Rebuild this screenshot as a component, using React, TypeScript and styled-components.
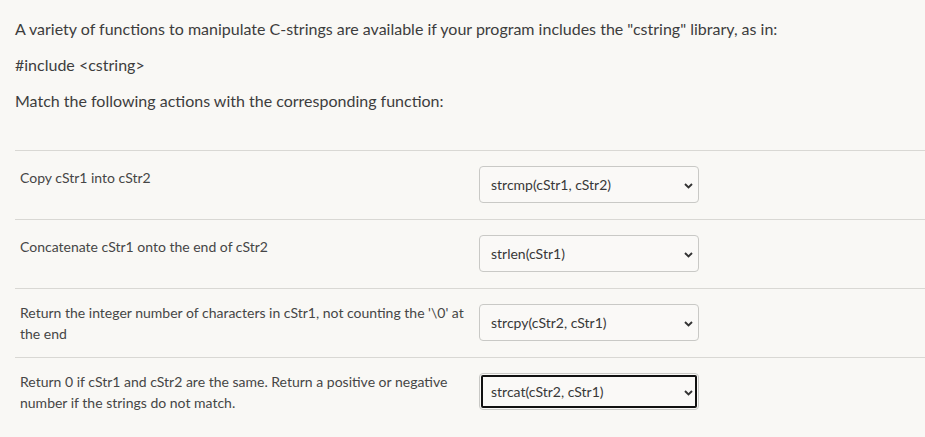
import React from "react";
import styled, { createGlobalStyle } from "styled-components";

const Global = createGlobalStyle`
  html, body {
    margin: 0;
    padding: 0;
    background: #f9f8f5;
  }
  body {
    font-family: Lato, "Noto Sans", sans-serif;
    color: #3a3a3a;
  }
`;

const Page = styled.div`
  padding: 0 0 0 15px;
  overflow: hidden;
`;

const Intro = styled.div`
  padding-top: 17px;
  margin-bottom: 37px;
`;

const Para = styled.p`
  margin: 0 0 12px;
  font-size: 16px;
  line-height: 24px;
  color: #3d3d3d;
`;

const List = styled.div`
  display: flex;
  flex-direction: column;
`;

const Row = styled.div`
  display: flex;
  align-items: center;
  border-top: 1px solid #d9d8d4;
`;

const Label = styled.div`
  box-sizing: border-box;
  width: 455px;
  min-height: 37px;
  padding: 0 5px;
  font-size: 14px;
  line-height: 21px;
  color: #464646;
`;

const SelectCell = styled.div`
  padding: 15px 0 16px 9px;
`;

const SelectWrap = styled.div`
  position: relative;
  width: 220px;
  height: 37px;
`;

const Select = styled.select<{ $focused?: boolean }>`
  appearance: none;
  -webkit-appearance: none;
  box-sizing: border-box;
  width: 220px;
  height: 37px;
  margin: 0;
  padding: 0 28px 0 11px;
  border: 1px solid #c9c9c6;
  border-radius: 4px;
  background: #faf9f7;
  font-family: Lato, "Noto Sans", sans-serif;
  font-size: 14px;
  color: #383838;
  outline: ${(p) => (p.$focused ? "2px solid #111" : "none")};
  outline-offset: -4px;
`;

const Chevron = styled.svg`
  position: absolute;
  right: 6px;
  top: 50%;
  width: 9px;
  height: 6px;
  margin-top: -2px;
  pointer-events: none;
`;

const options = [
  "strcmp(cStr1, cStr2)",
  "strlen(cStr1)",
  "strcpy(cStr2, cStr1)",
  "strcat(cStr2, cStr1)",
];

const rows = [
  { label: "Copy cStr1 into cStr2", value: "strcmp(cStr1, cStr2)" },
  { label: "Concatenate cStr1 onto the end of cStr2", value: "strlen(cStr1)" },
  {
    label:
      "Return the integer number of characters in cStr1, not counting the '\\0' at the end",
    value: "strcpy(cStr2, cStr1)",
  },
  {
    label:
      "Return 0 if cStr1 and cStr2 are the same. Return a positive or negative number if the strings do not match.",
    value: "strcat(cStr2, cStr1)",
    focused: true,
  },
];

export default function App() {
  return (
    <Page>
      <Global />
      <Intro>
        <Para>
          A variety of functions to manipulate C-strings are available if your
          program includes the "cstring" library, as in:
        </Para>
        <Para>#include &lt;cstring&gt;</Para>
        <Para>Match the following actions with the corresponding function:</Para>
      </Intro>
      <List>
        {rows.map((r) => (
          <Row key={r.label}>
            <Label>{r.label}</Label>
            <SelectCell>
              <SelectWrap>
                <Select defaultValue={r.value} $focused={r.focused}>
                  {options.map((o) => (
                    <option key={o} value={o}>
                      {o}
                    </option>
                  ))}
                </Select>
                <Chevron viewBox="0 0 9 6">
                  <path
                    d="M1 1 L4.5 4.5 L8 1"
                    fill="none"
                    stroke="#333"
                    strokeWidth="1.9"
                  />
                </Chevron>
              </SelectWrap>
            </SelectCell>
          </Row>
        ))}
      </List>
    </Page>
  );
}
